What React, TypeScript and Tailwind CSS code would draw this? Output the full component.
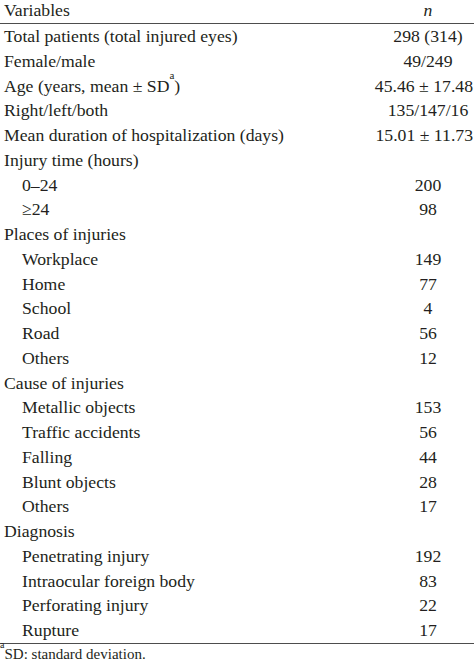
import React from "react";

type Ligne = { label: React.ReactNode; n?: string; retrait?: boolean; droite?: boolean };

const lignes: Ligne[] = [
  { label: "Total patients (total injured eyes)", n: "298 (314)" },
  { label: "Female/male", n: "49/249" },
  {
    label: (
      <>
        Age (years, mean ± SD<sup className="align-super text-[11px] leading-none">a</sup>)
      </>
    ),
    n: "45.46 ± 17.48",
    droite: true,
  },
  { label: "Right/left/both", n: "135/147/16" },
  { label: "Mean duration of hospitalization (days)", n: "15.01 ± 11.73", droite: true },
  { label: "Injury time (hours)" },
  { label: "0–24", n: "200", retrait: true },
  { label: "≥24", n: "98", retrait: true },
  { label: "Places of injuries" },
  { label: "Workplace", n: "149", retrait: true },
  { label: "Home", n: "77", retrait: true },
  { label: "School", n: "4", retrait: true },
  { label: "Road", n: "56", retrait: true },
  { label: "Others", n: "12", retrait: true },
  { label: "Cause of injuries" },
  { label: "Metallic objects", n: "153", retrait: true },
  { label: "Traffic accidents", n: "56", retrait: true },
  { label: "Falling", n: "44", retrait: true },
  { label: "Blunt objects", n: "28", retrait: true },
  { label: "Others", n: "17", retrait: true },
  { label: "Diagnosis" },
  { label: "Penetrating injury", n: "192", retrait: true },
  { label: "Intraocular foreign body", n: "83", retrait: true },
  { label: "Perforating injury", n: "22", retrait: true },
  { label: "Rupture", n: "17", retrait: true },
];

export default function App() {
  return (
    <div className="w-[474px] h-[667px] overflow-hidden bg-white text-[#231f20] font-['Liberation_Serif',serif] text-[17.7px]">
      {/* En-tête */}
      <div className="flex h-[22.5px] leading-[21px]">
        <div className="flex-1 pl-[4px]">Variables</div>
        <div className="w-[92px] flex justify-center italic">n</div>
      </div>
      <div className="h-[1.5px] bg-[#4d4d4d]" />

      {lignes.map((l, i) => (
        <div key={i} className="flex h-[24.75px] leading-[24.75px] whitespace-nowrap">
          <div className={l.retrait ? "flex-1 pl-[22px]" : "flex-1 pl-[4px]"}>{l.label}</div>
          <div className={l.droite ? "w-[100px] flex justify-end pr-[1px]" : "w-[92px] flex justify-center"}>{l.n}</div>
        </div>
      ))}

      <div className="h-[1.5px] bg-[#4d4d4d]" />
      <p className="text-[15px] leading-[12px] pt-[1px] whitespace-nowrap">
        <sup className="align-super text-[10px] leading-none">a</sup>SD: standard deviation.
      </p>
    </div>
  );
}
